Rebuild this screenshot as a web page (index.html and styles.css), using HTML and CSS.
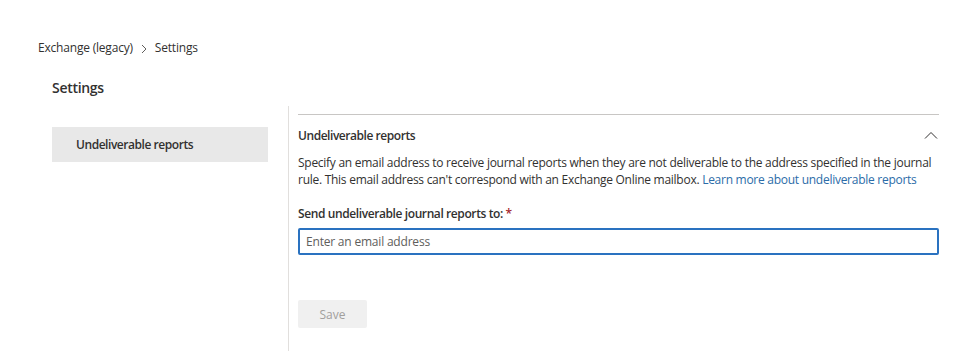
FILE: index.html
```html
<!DOCTYPE html>
<html lang="en">
<head>
  <meta charset="utf-8">
  <title>Settings</title>
  <link rel="stylesheet" href="styles.css">
</head>
<body>
  <div class="breadcrumb">
    <span>Exchange (legacy)</span>
    <svg class="crumb-sep" width="8" height="10" viewBox="0 0 8 10"><path d="M2 1 L6 5 L2 9" fill="none" stroke="#605e5c" stroke-width="1"/></svg>
    <span>Settings</span>
  </div>

  <h1 class="page-title">Settings</h1>

  <div class="layout">
    <div class="nav">
      <div class="nav-item selected">Undeliverable reports</div>
    </div>

    <div class="content">
      <div class="section">
        <div class="section-header">
          <h2>Undeliverable reports</h2>
          <svg class="chevron" width="14" height="8" viewBox="0 0 14 8"><path d="M1 7.5 L7 1.5 L13 7.5" fill="none" stroke="#323130" stroke-width="1"/></svg>
        </div>
        <p class="description">Specify an email address to receive journal reports when they are not deliverable to the address specified in the journal rule. This email address can't correspond with an Exchange Online mailbox. <a href="#">Learn more about undeliverable reports</a></p>

        <label class="field-label" for="email">Send undeliverable journal reports to: <span class="required">*</span></label>
        <input class="text-input" id="email" type="text" placeholder="Enter an email address">

        <button class="btn" disabled>Save</button>
      </div>
    </div>
  </div>
</body>
</html>
```

FILE: styles.css
```css
body {
  margin: 0;
  font-family: "Open Sans", "Noto Sans", sans-serif;
  font-size: 12px;
  color: #323130;
  background: #ffffff;
}

.breadcrumb {
  display: flex;
  align-items: center;
  gap: 7px;
  padding: 40px 0 0 38px;
  font-size: 12px;
  line-height: 16px;
  letter-spacing: -0.2px;
}

.crumb-sep {
  margin-top: 1px;
}

.page-title {
  margin: 0;
  padding: 22px 0 0 52px;
  font-size: 14px;
  font-weight: 600;
  line-height: 20px;
  letter-spacing: -0.3px;
}

.layout {
  display: flex;
  margin-top: 8px;
}

.nav {
  width: 216px;
  margin-left: 52px;
  padding-top: 21px;
}

.nav-item {
  height: 35px;
  line-height: 35px;
  padding-left: 24px;
  font-size: 12px;
  font-weight: 600;
  letter-spacing: -0.45px;
}

.nav-item.selected {
  background: #e8e8e8;
}

.content {
  flex: 1;
  margin-left: 20px;
  border-left: 1px solid #e1dfdd;
  padding: 8px 21px 24px 9px;
}

.section {
  border-top: 1px solid #c8c6c4;
}

.section-header {
  display: flex;
  align-items: center;
  justify-content: space-between;
  padding-top: 12px;
}

.section-header h2 {
  margin: 0;
  font-size: 12px;
  font-weight: 600;
  line-height: 18px;
  letter-spacing: -0.45px;
}

.chevron {
  margin-right: 1px;
  margin-top: -3px;
}

.description {
  margin: 9px 0 0;
  font-size: 12px;
  line-height: 17px;
  letter-spacing: -0.27px;
}

.description a {
  color: #2b6ca8;
  text-decoration: none;
}

.field-label {
  display: block;
  margin-top: 17px;
  font-size: 12px;
  font-weight: 600;
  line-height: 18px;
  letter-spacing: -0.4px;
}

.required {
  color: #a4262c;
}

.text-input {
  display: block;
  box-sizing: border-box;
  width: 100%;
  height: 27px;
  margin-top: 5px;
  padding: 0 6px;
  border: 2px solid #2a72c0;
  border-radius: 2px;
  font-family: inherit;
  font-size: 12px;
  letter-spacing: -0.2px;
  color: #323130;
  outline: none;
}

.text-input::placeholder {
  color: #605e5c;
}

.btn {
  display: block;
  margin-top: 45px;
  width: 69px;
  height: 28px;
  border: none;
  border-radius: 2px;
  background: #f0f0f0;
  color: #a19f9d;
  font-family: inherit;
  font-size: 12px;
}
```
